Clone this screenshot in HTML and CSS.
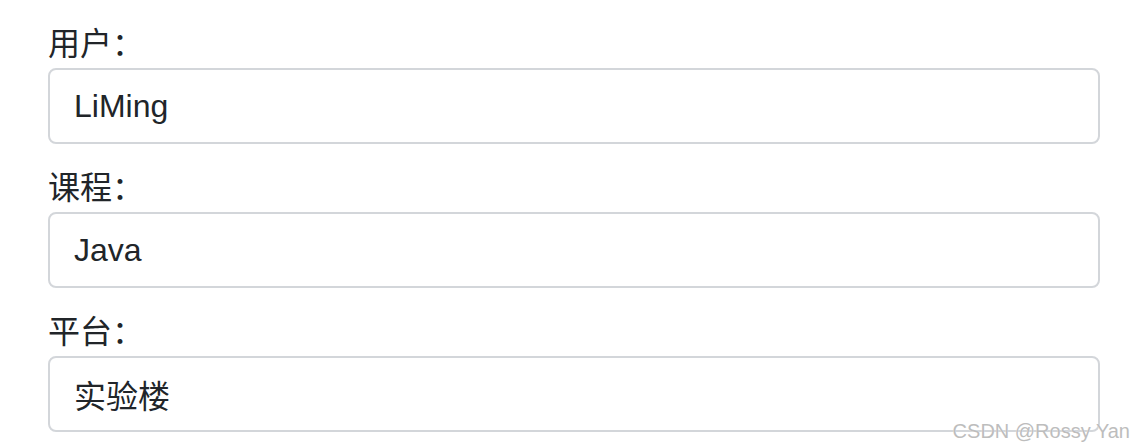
FILE: index.html
```html
<!DOCTYPE html>
<html lang="zh-CN">
<head>
    <meta charset="UTF-8">
    <meta name="viewport" content="width=device-width, initial-scale=1.0">
    <title>表单</title>
    <link rel="stylesheet" href="styles.css">
</head>
<body>
    <form class="info-form">
        <label for="user">用户：</label>
        <input type="text" id="user" class="form-control" value="LiMing">
        <label for="course">课程：</label>
        <input type="text" id="course" class="form-control" value="Java">
        <label for="platform">平台：</label>
        <input type="text" id="platform" class="form-control" value="实验楼">
    </form>
    <div class="watermark">CSDN @Rossy Yan</div>
</body>
</html>
```

FILE: styles.css
```css
html, body {
    margin: 0;
    height: 100%;
}
body {
    font-family: "Liberation Sans", "Noto Sans CJK SC", sans-serif;
    color: #212529;
    background: #fff;
    position: relative;
    overflow: hidden;
}
.info-form {
    padding: 20px 34px 0 48px;
}
label {
    display: block;
    font-size: 32px;
    line-height: 48px;
    height: 48px;
}
.form-control {
    display: block;
    box-sizing: border-box;
    width: 100%;
    height: 76px;
    margin: 0 0 20px 0;
    padding: 0 24px;
    font-family: inherit;
    font-size: 32px;
    color: #212529;
    background: #fff;
    border: 2px solid #d3d6da;
    border-radius: 8px;
    outline: none;
}
.watermark {
    position: absolute;
    right: 4px;
    bottom: 5px;
    font-size: 20px;
    color: #bdbdbd;
    text-shadow: 0 0 1px #fff;
}
```
